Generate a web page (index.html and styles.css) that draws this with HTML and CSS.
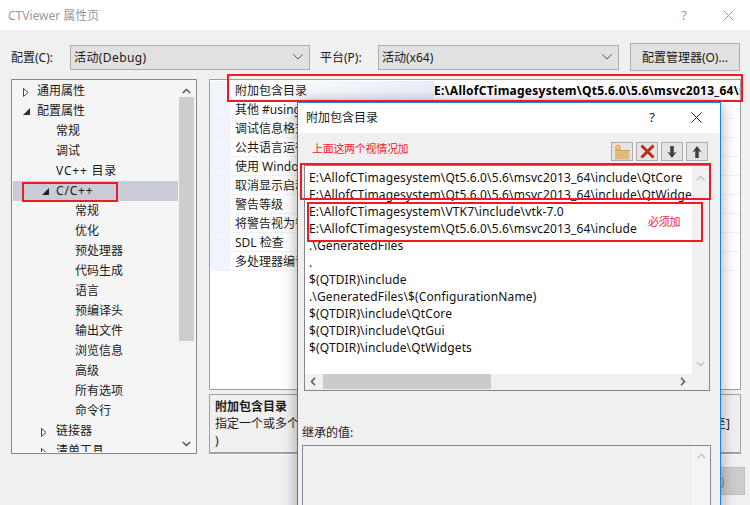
FILE: index.html
```html
<!DOCTYPE html>
<html lang="zh-CN">
<head>
<meta charset="utf-8">
<title>CTViewer 属性页</title>
<link rel="stylesheet" href="styles.css">
</head>
<body>
<div class="app">
  <header class="titlebar">
    <span class="title">CTViewer 属性页</span>
    <span class="help">?</span>
    <svg class="close" width="11" height="11" viewBox="0 0 11 11"><path d="M.5.5l10 10M10.5.5l-10 10" stroke="#9a9a9a" fill="none"/></svg>
  </header>

  <div class="config">
    <label class="cfg-label">配置(C):</label>
    <div class="select sel-a"><span>活动(Debug)</span><svg width="10" height="6" viewBox="0 0 10 6"><path d="M.5.5L5 5 9.500.5" stroke="#555" fill="none"/></svg></div>
    <label class="cfg-label cfg-b">平台(P):</label>
    <div class="select sel-b"><span>活动(x64)</span><svg width="10" height="6" viewBox="0 0 10 6"><path d="M.5.5L5 5 9.500.5" stroke="#555" fill="none"/></svg></div>
    <button class="mgr">配置管理器(O)...</button>
  </div>

  <div class="panes">
    <nav class="tree">
      <ul class="tree-list">
        <li class="l0"><svg class="tw" width="6" height="9" viewBox="0 0 6 9"><path d="M.5.5L5 4.500.5 8.500z" fill="#fff" stroke="#444"/></svg>通用属性</li>
        <li class="l0"><svg class="tw" width="7" height="7" viewBox="0 0 7 7"><path d="M7 0v7H0z" fill="#333"/></svg>配置属性</li>
        <li class="l1">常规</li>
        <li class="l1">调试</li>
        <li class="l1 wide">VC++ 目录</li>
        <li class="l1 selected wide"><svg class="tw" width="7" height="7" viewBox="0 0 7 7"><path d="M7 0v7H0z" fill="#222"/></svg>C/C++</li>
        <li class="l2">常规</li>
        <li class="l2">优化</li>
        <li class="l2">预处理器</li>
        <li class="l2">代码生成</li>
        <li class="l2">语言</li>
        <li class="l2">预编译头</li>
        <li class="l2">输出文件</li>
        <li class="l2">浏览信息</li>
        <li class="l2">高级</li>
        <li class="l2">所有选项</li>
        <li class="l2">命令行</li>
        <li class="l1"><svg class="tw" width="6" height="9" viewBox="0 0 6 9"><path d="M.5.5L5 4.500.5 8.500z" fill="#fff" stroke="#444"/></svg>链接器</li>
        <li class="l1"><svg class="tw" width="6" height="9" viewBox="0 0 6 9"><path d="M.5.5L5 4.500.5 8.500z" fill="#fff" stroke="#444"/></svg>清单工具</li>
      </ul>
      <div class="tree-scroll">
        <svg class="arrow" width="9" height="6" viewBox="0 0 9 6"><path d="M.8 5L4.500 1.500 8.200 5" stroke="#555" stroke-width="1.500" fill="none"/></svg>
        <div class="tree-thumb"></div>
        <svg class="arrow" width="9" height="6" viewBox="0 0 9 6"><path d="M.8 1L4.500 4.500 8.200 1" stroke="#555" stroke-width="1.500" fill="none"/></svg>
      </div>
    </nav>

    <section class="right">
      <div class="props">
        <div class="row current"><span class="gutter"></span><span class="name">附加包含目录</span><span class="value">E:\AllofCTimagesystem\Qt5.6.0\5.6\msvc2013_64\include</span></div>
        <div class="row"><span class="gutter"></span><span class="name">其他 #using 指令</span></div>
        <div class="row"><span class="gutter"></span><span class="name">调试信息格式</span></div>
        <div class="row"><span class="gutter"></span><span class="name">公共语言运行时支持</span></div>
        <div class="row"><span class="gutter"></span><span class="name">使用 Windows 运行时扩展</span></div>
        <div class="row"><span class="gutter"></span><span class="name">取消显示启动版权标志</span></div>
        <div class="row"><span class="gutter"></span><span class="name">警告等级</span></div>
        <div class="row"><span class="gutter"></span><span class="name">将警告视为错误</span></div>
        <div class="row"><span class="gutter"></span><span class="name">SDL 检查</span></div>
        <div class="row"><span class="gutter"></span><span class="name">多处理器编译</span></div>
      </div>
      <div class="desc">
        <strong>附加包含目录</strong>
        <p class="desc-line"><span>指定一个或多个要添加到包含路径中的目录</span><span>至]</span></p>
        <p>)</p>
      </div>
    </section>
  </div>

  <footer class="footer"><button class="apply">应用(A)</button></footer>

  <div class="dialog">
    <div class="dlg-title">
      <span class="dlg-name">附加包含目录</span>
      <span class="dlg-help">?</span>
      <svg class="dlg-close" width="11" height="11" viewBox="0 0 11 11"><path d="M.5.5l10 10M10.5.5l-10 10" stroke="#222" fill="none"/></svg>
    </div>
    <div class="dlg-body">
      <div class="dlg-tools">
        <span class="note">上面这两个视情况加</span>
        <div class="toolbar">
          <span class="tool"><svg width="18" height="16" viewBox="0 0 18 16"><path d="M2 5h5l1 1h8.500v9.500H2z" fill="#dfb97e"/><path d="M7.500 6.500h9" stroke="#c79d5f"/><path d="M5 .5v6M2 3.500h6M2.800 1.300l4.400 4.400M7.200 1.300L2.800 5.700" stroke="#e39a12" stroke-width="1.200"/><circle cx="5" cy="3.500" r="1.200" fill="#fff3c0"/></svg></span>
          <span class="tool"><svg width="15" height="15" viewBox="0 0 15 15"><path d="M1.500 1.500l12 12M13.500 1.500l-12 12" stroke="#b5301f" stroke-width="3"/></svg></span>
          <span class="tool"><svg width="12" height="14" viewBox="0 0 12 14"><path d="M6 1v8" stroke="#3a3f44" stroke-width="3.500"/><path d="M1.200 6.500L6 13l4.800-6.500L6 9z" fill="#3a3f44"/></svg></span>
          <span class="tool"><svg width="12" height="14" viewBox="0 0 12 14"><path d="M6 13V5" stroke="#3a3f44" stroke-width="3.500"/><path d="M1.200 7.500L6 1l4.800 6.500L6 5z" fill="#3a3f44"/></svg></span>
        </div>
      </div>
      <div class="listbox">
        <div class="list-main">
          <div class="lines">
            <div>E:\AllofCTimagesystem\Qt5.6.0\5.6\msvc2013_64\include\QtCore</div>
            <div>E:\AllofCTimagesystem\Qt5.6.0\5.6\msvc2013_64\include\QtWidgets</div>
            <div>E:\AllofCTimagesystem\VTK7\include\vtk-7.0</div>
            <div>E:\AllofCTimagesystem\Qt5.6.0\5.6\msvc2013_64\include</div>
            <div>.\GeneratedFiles</div>
            <div>.</div>
            <div>$(QTDIR)\include</div>
            <div>.\GeneratedFiles\$(ConfigurationName)</div>
            <div>$(QTDIR)\include\QtCore</div>
            <div>$(QTDIR)\include\QtGui</div>
            <div>$(QTDIR)\include\QtWidgets</div>
          </div>
          <div class="vscroll">
            <svg width="9" height="6" viewBox="0 0 9 6"><path d="M.8 5L4.500 1.500 8.200 5" stroke="#c4c4c4" stroke-width="1.500" fill="none"/></svg>
            <svg width="9" height="6" viewBox="0 0 9 6"><path d="M.8 1L4.500 4.500 8.200 1" stroke="#c4c4c4" stroke-width="1.500" fill="none"/></svg>
          </div>
        </div>
        <div class="hscroll">
          <svg width="6" height="9" viewBox="0 0 6 9"><path d="M5 .8L1.500 4.500 5 8.200" stroke="#555" stroke-width="1.500" fill="none"/></svg>
          <div class="h-track"><div class="h-thumb"></div></div>
          <svg width="6" height="9" viewBox="0 0 6 9"><path d="M1 .8L4.500 4.500 1 8.200" stroke="#555" stroke-width="1.500" fill="none"/></svg>
        </div>
      </div>
      <div class="inherit-label">继承的值:</div>
      <div class="inherit">
        <div class="inherit-scroll"><svg width="9" height="6" viewBox="0 0 9 6"><path d="M.8 5L4.500 1.500 8.200 5" stroke="#c4c4c4" stroke-width="1.500" fill="none"/></svg></div>
      </div>
    </div>
  </div>

  <div class="mark mark-row"></div>
  <div class="mark mark-tree"></div>
  <div class="mark mark-top"></div>
  <div class="mark mark-add"></div>
  <span class="note note-add">必须加</span>
</div>
</body>
</html>
```

FILE: styles.css
```css
* { box-sizing: border-box; }
html, body { margin: 0; padding: 0; }
body { background: #f0f0f0; }

.app {
  position: relative;
  width: 750px;
  height: 505px;
  overflow: hidden;
  background: #f0f0f0;
  color: #1a1a1a;
  font: 12px/17px "Noto Sans", "Noto Sans CJK SC", sans-serif;
}

/* title bar */
.titlebar {
  display: flex;
  align-items: center;
  height: 30px;
  padding: 0 16px 0 8px;
  background: #fff;
  color: #999;
}
.title { flex: 1; }
.help { font-size: 13px; margin-right: 36px; }

/* configuration row */
.config {
  display: flex;
  align-items: center;
  height: 28px;
  margin-top: 13px;
  padding-left: 11px;
}
.cfg-label { width: 59px; }
.cfg-b { width: 58px; margin-left: 10px; }
.select {
  display: flex;
  align-items: center;
  justify-content: space-between;
  height: 25px;
  padding: 0 6px 0 3px;
  background: #e1e1e1;
  border: 1px solid #adadad;
}
.sel-a { width: 240px; letter-spacing: .4px; }
.sel-b { width: 241px; }
.mgr {
  width: 110px;
  height: 28px;
  margin-left: 11px;
  padding: 0;
  background: #e1e1e1;
  border: 1px solid #adadad;
  color: inherit;
  font: inherit;
}

/* panes */
.panes {
  display: flex;
  gap: 12px;
  height: 375px;
  margin-top: 8px;
  padding-left: 11px;
}

/* tree */
.tree {
  display: flex;
  width: 186px;
  background: #f5f5f5;
  border: 1px solid #828790;
  overflow: hidden;
}
.tree-list {
  flex: 1;
  margin: 0 0 1px;
  padding: 1px 0 0;
  list-style: none;
  overflow: hidden;
}
.tree-list li {
  position: relative;
  height: 20px;
  line-height: 20px;
  white-space: nowrap;
}
.l0 { padding-left: 25px; }
.l1 { padding-left: 44px; }
.l2 { padding-left: 63px; }
.tree-list .wide { letter-spacing: .8px; }
.tree-list .selected { background: #c9cbd9; margin-left: 1px; padding-left: 43px; }
.l0 .tw { position: absolute; left: 11px; top: 7px; }
.l1 .tw { position: absolute; left: 29px; top: 7px; }
.tree-scroll {
  display: flex;
  flex-direction: column;
  align-items: center;
  width: 18px;
  padding: 8px 2px 6px 0;
}
.tree-thumb {
  width: 15px;
  height: 244px;
  margin: 3px 0 auto;
  background: #cdcdcd;
}

/* property grid */
.right { display: flex; flex-direction: column; width: 532px; }
.props {
  height: 312px;
  padding-top: 1px;
  background: #fff;
  border: 1px solid #a0a0a0;
}
.row {
  display: flex;
  height: 19px;
  line-height: 20px;
  white-space: nowrap;
  overflow: hidden;
  border-bottom: 1px solid #eef1f8;
}
.gutter { flex: none; width: 21px; background: #f1f4fa; }
.name { flex: none; width: 203px; padding-left: 4px; }
.current .name { background: linear-gradient(90deg, #fff, #e8eef8); }
.value { font-weight: 700; overflow: hidden; letter-spacing: .25px; color: #000; }
.desc {
  flex: 1;
  margin-top: 4px;
  padding: 3px 10px 3px 5px;
  background: #f0f0f0;
  border: 1px solid #a0a0a0;
  border-bottom-width: 2px;
  box-shadow: 0 1px #fff;
}
.desc strong { display: block; }
.desc p { margin: 0; }
.desc-line { display: flex; justify-content: space-between; }

/* footer */
.footer { display: flex; justify-content: flex-end; margin-top: 13px; padding-right: 5px; }
.apply {
  width: 80px;
  height: 28px;
  padding: 0;
  background: #cccccc;
  border: 1px solid #bfbfbf;
  color: #8a8a8a;
  font: inherit;
}

/* floating dialog */
.dialog {
  position: absolute;
  left: 297px;
  top: 102px;
  width: 424px;
  height: 430px;
  background: #f0f0f0;
  border: 1px solid #1883d7;
  box-shadow: 0 0 14px rgba(0, 0, 0, .35);
}
.dlg-title {
  display: flex;
  align-items: center;
  height: 30px;
  padding: 0 18px 2px 8px;
  background: #fff;
}
.dlg-name { flex: 1; }
.dlg-help { margin-right: 36px; font-size: 13px; }
.dlg-body { padding: 0 10px 0 4px; }
.dlg-tools {
  display: flex;
  justify-content: space-between;
  height: 32px;
  padding: 9px 2px 0 10px;
}
.toolbar { display: flex; gap: 3px; }
.tool {
  display: flex;
  align-items: center;
  justify-content: center;
  width: 22px;
  height: 19px;
  background: #e4e4e4;
  border: 1px solid #adadad;
}
.note { color: #f0202a; font-size: 11px; line-height: 14px; letter-spacing: -.3px; }

.listbox {
  display: flex;
  flex-direction: column;
  height: 226px;
  margin-left: 2px;
  border: 1px solid #828790;
}
.list-main { flex: 1; display: flex; min-height: 0; }
.lines {
  flex: 1;
  min-width: 0;
  padding: 3px 0 0 4px;
  background: #fff;
  color: #111;
  letter-spacing: .135px;
  white-space: nowrap;
  overflow: hidden;
}
.vscroll {
  display: flex;
  flex-direction: column;
  align-items: center;
  justify-content: space-between;
  width: 17px;
  padding: 9px 0 7px;
}
.hscroll {
  display: flex;
  align-items: center;
  height: 16px;
  padding: 0 23px 1px 5px;
}
.h-track { flex: 1; height: 15px; margin: 0 7px; }
.h-thumb { width: 168px; height: 15px; background: #cbcbcb; }

.inherit-label { margin: 33px 0 4px; }
.inherit {
  display: flex;
  justify-content: flex-end;
  height: 100px;
  margin-right: -1px;
  border: 1px solid #828790;
}
.inherit-scroll {
  display: flex;
  justify-content: center;
  width: 18px;
  padding-top: 7px;
  background: #f4f4f4;
}

/* red annotations drawn over the screenshot */
.mark { position: absolute; border: 2px solid #ed1c24; }
.mark-row { left: 227px; top: 74px; width: 516px; height: 28px; }
.mark-tree { left: 22px; top: 182px; width: 96px; height: 20px; }
.mark-top { left: 300px; top: 163px; width: 411px; height: 37px; }
.mark-add { left: 307px; top: 202px; width: 396px; height: 40px; }
.note-add { position: absolute; left: 648px; top: 215px; }
```
